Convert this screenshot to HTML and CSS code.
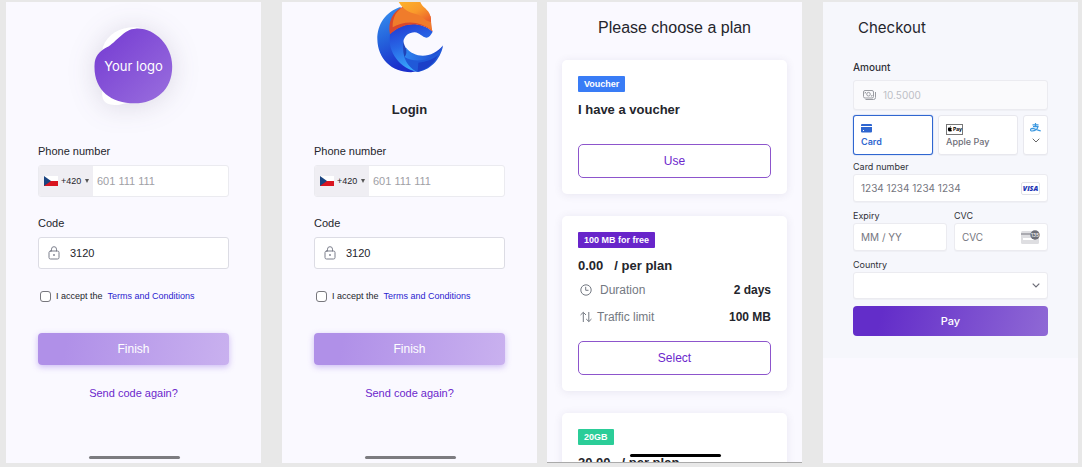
FILE: index.html
```
<!DOCTYPE html>
<html lang="en">
<head>
    <meta charset="UTF-8">
    <meta name="viewport" content="width=device-width, initial-scale=1.0">
    <title>Login and checkout screens</title>
    <link rel="stylesheet" href="styles.css">
</head>
<body>
    <svg width="0" height="0" class="defs" aria-hidden="true">
        <symbol id="flag-cz" viewBox="0 0 14 10">
            <path fill="#fff" d="M0 0h14v5H0z"/>
            <path fill="#d9141f" d="M0 5h14v5H0z"/>
            <path fill="#1a4480" d="M0 0l7 5-7 5z"/>
        </symbol>
        <symbol id="lock" viewBox="0 0 12 14">
            <g fill="none" stroke="#7b7e8b" stroke-linecap="round">
                <rect x="1" y="5" width="10" height="8" rx="1.5"/>
                <path d="M3.5 5V3.2a2.5 2.5 0 0 1 5 0V5"/>
            </g>
            <circle cx="6" cy="9" r=".9" fill="#7b7e8b"/>
        </symbol>
    </svg>
    <main>
        <section class="screen login">
            <div class="brand">
                <div class="blob-logo">
                    <svg viewBox="284 76 236 240" width="79" height="80" aria-hidden="true">
                        <defs>
                            <linearGradient id="blob" x1="0" y1="0" x2="1" y2="1">
                                <stop offset=".2" stop-color="#7b44d4"/>
                                <stop offset="1" stop-color="#9a6fde"/>
                            </linearGradient>
                        </defs>
                        <path fill="#fff" d="M310 140C325 95 370 76 415 80C470 90 500 200 480 260C450 290 390 308 360 312C325 316 308 305 308 280Z"/>
                        <path fill="url(#blob)" d="M285 195C286 165 300 152 322 140C350 125 375 84 408 84C465 80 518 135 518 195C520 265 470 308 405 308C335 308 283 270 285 195Z"/>
                    </svg>
                    <span>Your logo</span>
                </div>
            </div>
            <form>
                <label for="phone1">Phone number</label>
                <div class="field phone">
                    <div class="prefix">
                        <svg width="14" height="10" aria-hidden="true"><use href="#flag-cz"/></svg>
                        <select aria-label="Country code"><option>+420</option></select>
                        <svg width="4" height="4" viewBox="0 0 4 4" aria-hidden="true"><path d="M0 0h4L2 4z" fill="#555"/></svg>
                    </div>
                    <input type="tel" id="phone1" placeholder="601 111 111">
                </div>
                <label for="code1">Code</label>
                <div class="field code">
                    <svg width="12" height="14" aria-hidden="true"><use href="#lock"/></svg>
                    <input type="text" id="code1" value="3120">
                </div>
                <div class="terms">
                    <input type="checkbox" id="terms1">
                    <label for="terms1">I accept the</label>
                    <a href="#">Terms and Conditions</a>
                </div>
                <button type="button" class="finish">Finish</button>
                <a href="#" class="resend">Send code again?</a>
            </form>
            <div class="home-bar"></div>
        </section>

        <section class="screen login">
            <div class="brand">
                <svg class="flame-logo" viewBox="36 6 198 213" width="66" height="71" aria-hidden="true">
                    <defs>
                        <linearGradient id="c-left" x1="0" y1="0" x2=".3" y2="1">
                            <stop offset="0" stop-color="#3a96f2"/>
                            <stop offset=".5" stop-color="#2565dd"/>
                            <stop offset="1" stop-color="#1b2fcb"/>
                        </linearGradient>
                        <linearGradient id="c-mid" x1="0" y1="0" x2=".3" y2="1">
                            <stop offset="0" stop-color="#2236cf"/>
                            <stop offset=".5" stop-color="#2866e6"/>
                            <stop offset="1" stop-color="#38a8fb"/>
                        </linearGradient>
                        <linearGradient id="c-tail" x1="0" y1="0" x2="1" y2="0">
                            <stop offset="0" stop-color="#2e86f0"/>
                            <stop offset="1" stop-color="#1d42cc"/>
                        </linearGradient>
                        <linearGradient id="c-top" x1="0" y1="0" x2="1" y2="1">
                            <stop offset="0" stop-color="#fdb32c"/>
                            <stop offset=".5" stop-color="#f99a2b"/>
                            <stop offset="1" stop-color="#e9572b"/>
                        </linearGradient>
                    </defs>
                    <path fill="url(#c-left)" d="M108 20C62 34 36 74 37 118C38 176 80 217 138 217L156 214L90 120L78 80Z"/>
                    <path fill="url(#c-mid)" d="M75 103C105 66 165 60 203 95C198 105 192 112 184 113C172 112 164 98 149 97C132 97 117 108 115 126C114 165 128 198 156 215C108 207 66 158 75 103Z"/>
                    <path fill="#1f44b8" d="M115 122C118 142 128 155 145 164L134 180L118 171C114 155 113 138 115 122Z"/>
                    <path fill="url(#c-tail)" d="M122 142C150 178 204 175 234 136C225 165 195 188 150 186C136 184 127 178 118 171C125 165 126 155 122 142Z"/>
                    <path fill="#2059d8" d="M118 171C150 190 205 185 234 137C226 180 194 211 156 216C136 205 124 190 118 171Z"/>
                    <path fill="#1c40c8" d="M160 188C184 186 204 178 219 166C206 192 184 210 158 215Z"/>
                    <path fill="#d9482d" d="M75 103C68 68 81 34 114 20L196 48C200 66 197 80 203 95C168 65 115 65 75 103Z"/>
                    <path fill="#f07c2b" d="M83 82C82 52 96 29 116 22L194 44C200 63 197 78 202 92C165 62 120 60 83 82Z"/>
                    <path fill="url(#c-top)" d="M101 6H166C171 22 191 27 196 48C198 57 198 62 198 66C176 62 174 47 152 42C131 36 116 30 101 6Z"/>
                </svg>
                <h1>Login</h1>
            </div>
            <form>
                <label for="phone2">Phone number</label>
                <div class="field phone">
                    <div class="prefix">
                        <svg width="14" height="10" aria-hidden="true"><use href="#flag-cz"/></svg>
                        <select aria-label="Country code"><option>+420</option></select>
                        <svg width="4" height="4" viewBox="0 0 4 4" aria-hidden="true"><path d="M0 0h4L2 4z" fill="#555"/></svg>
                    </div>
                    <input type="tel" id="phone2" placeholder="601 111 111">
                </div>
                <label for="code2">Code</label>
                <div class="field code">
                    <svg width="12" height="14" aria-hidden="true"><use href="#lock"/></svg>
                    <input type="text" id="code2" value="3120">
                </div>
                <div class="terms">
                    <input type="checkbox" id="terms2">
                    <label for="terms2">I accept the</label>
                    <a href="#">Terms and Conditions</a>
                </div>
                <button type="button" class="finish">Finish</button>
                <a href="#" class="resend">Send code again?</a>
            </form>
            <div class="home-bar"></div>
        </section>

        <section class="screen plans">
            <h1>Please choose a plan</h1>
            <article class="plan">
                <span class="badge blue">Voucher</span>
                <h2>I have a voucher</h2>
                <button type="button" class="use">Use</button>
            </article>
            <article class="plan">
                <span class="badge purple">100 MB for free</span>
                <h2><span>0.00</span><span>/ per plan</span></h2>
                <dl>
                    <div class="duration">
                        <dt>
                            <svg width="12" height="12" viewBox="0 0 12 12" aria-hidden="true"><g fill="none" stroke="#747982"><circle cx="6" cy="6" r="5.2"/><path d="M5.7 2.8v3.5h2.8"/></g></svg>
                            Duration
                        </dt>
                        <dd>2 days</dd>
                    </div>
                    <div class="traffic">
                        <dt>
                            <svg width="12" height="12" viewBox="0 0 12 12" aria-hidden="true"><path d="M3.3 11V1.5M.5 4l2.8-2.7L6 4M8.8 1v9.5M6.2 8l2.6 2.6L11.5 8" fill="none" stroke="#747982"/></svg>
                            Traffic limit
                        </dt>
                        <dd>100 MB</dd>
                    </div>
                </dl>
                <button type="button">Select</button>
            </article>
            <article class="plan">
                <span class="badge green">20GB</span>
                <h2><span>20.00</span><span>/ per plan</span></h2>
            </article>
            <div class="home-bar"></div>
        </section>

        <section class="screen checkout">
            <h1>Checkout</h1>
            <form>
                <label for="amount" class="amount-label">Amount</label>
                <div class="field amount">
                    <svg width="13" height="10" viewBox="0 0 13 10" aria-hidden="true"><g fill="none" stroke="#9a9ca2"><rect x=".5" y=".5" width="10" height="7.5" rx="1.5"/><circle cx="5.5" cy="4.2" r="1.8"/><path d="M2 3.5v-1h1M9 5v1H8M2.5 9.5h8a2 2 0 0 0 2-2V2"/></g></svg>
                    <input type="text" id="amount" value="10.5000" disabled>
                </div>
                <div class="methods">
                    <button type="button" class="active">
                        <svg width="11" height="9" viewBox="0 0 11 9" aria-hidden="true"><path fill="#2f66d0" d="M1 0h9q1 0 1 1v1H0V1q0-1 1-1zM0 3h11v4.500q0 1-1 1H1q-1 0-1-1zM2 6v1h1V6z" fill-rule="evenodd"/></svg>
                        Card
                    </button>
                    <button type="button">
                        <svg width="17" height="11" viewBox="0 0 17 11" aria-hidden="true"><rect x=".5" y=".5" width="16" height="10" fill="#fff" stroke="#777"/><path d="M4.800 3.500c-.7-.3-1 .1-1.300.1S2 3.200 1.900 5s1 2.700 1.500 2.500.7-.2 1.200 0S5.800 7 5.900 6.400c-1-.4-.8-1.500-.1-1.900-.2-.5-.6-.8-1-1zM4 3c0-.7.4-1.100 1-1.200C5.100 2.500 4.700 3 4 3z"/><text x="7" y="7" font-size="5" font-weight="700">Pay</text></svg>
                        Apple Pay
                    </button>
                    <button type="button" class="more" aria-label="More payment methods">
                        <svg width="11" height="9" viewBox="0 0 11 9" aria-hidden="true"><path d="M2.500 1.800h6M5.500 0v3.500M3 3.700h5C7.300 6.500 4.500 8 2 8 0 8 0 5.500 2.200 5.400c2.300 0 5 1.800 8.500 2.400" fill="none" stroke="#3b98e0" stroke-width="1.200"/></svg>
                        <svg width="8" height="5" viewBox="0 0 8 5" aria-hidden="true"><path d="M.7.700L4 4 7.300.7" fill="none" stroke="#666"/></svg>
                    </button>
                </div>
                <label for="card">Card number</label>
                <div class="field">
                    <input type="text" id="card" placeholder="1234 1234 1234 1234">
                    <svg width="19" height="13" viewBox="0 0 19 13" aria-hidden="true"><rect x=".5" y=".5" width="18" height="12" rx="1.500" fill="#fff" stroke="#e1e1e6"/><text x="9.500" y="9" font-family="Open Sans" font-size="7" font-weight="800" font-style="italic" text-anchor="middle" fill="#2034b4">VISA</text></svg>
                </div>
                <div class="pair">
                    <div>
                        <label for="expiry">Expiry</label>
                        <div class="field">
                            <input type="text" id="expiry" placeholder="MM / YY">
                        </div>
                    </div>
                    <div>
                        <label for="cvc">CVC</label>
                        <div class="field">
                            <input type="text" id="cvc" placeholder="CVC">
                            <svg width="19" height="14" viewBox="0 0 19 14" aria-hidden="true"><rect y="1" width="18" height="13" rx="1.500" fill="#dedee1"/><path fill="#aaaab0" d="M0 3h18v2H0z"/><path fill="#fff" d="M2 8h11v2H2z"/><circle cx="14" cy="5" r="4.700" fill="#6d6e77"/><text x="14" y="7" font-size="5" text-anchor="middle" fill="#fff">135</text></svg>
                        </div>
                    </div>
                </div>
                <label for="country">Country</label>
                <div class="field country">
                    <select id="country"><option></option></select>
                    <svg width="8" height="5" viewBox="0 0 8 5" aria-hidden="true"><path d="M.7.700L4 4 7.300.7" fill="none" stroke="#6d6e78" stroke-width="1.200"/></svg>
                </div>
                <button type="button" class="pay">Pay</button>
            </form>
        </section>
    </main>
</body>
</html>
```
FILE: styles.css
```
* {
    margin: 0;
    padding: 0;
    box-sizing: border-box;
}
body {
    font-family: 'Liberation Sans', Arial, sans-serif;
    font-size: 11px;
    line-height: 20px;
    color: #24252c;
    background-color: #e8e8e8;
}
.defs {
    position: absolute;
}
main {
    display: grid;
    grid-template-columns: 1fr 21px 1fr 10px 1fr 21px 1fr;
    height: 100vh;
    padding: 2px 4px 4px 6px;
}
.screen {
    position: relative;
    min-width: 0;
    min-height: 0;
    overflow: hidden;
    background-color: #faf9ff;
}
.screen:nth-child(2) {
    grid-column: 3;
}
.screen:nth-child(3) {
    grid-column: 5;
}
.screen:nth-child(4) {
    grid-column: 7;
}
input, select, button {
    font: inherit;
    color: inherit;
    border: none;
    background: none;
    min-width: 0;
    outline: none;
}
select {
    appearance: none;
}
label {
    display: block;
}
a {
    text-decoration: none;
}
svg {
    flex: none;
}
.field {
    display: flex;
    align-items: center;
    background-color: #fff;
    border: 1px solid #ebebf0;
    border-radius: 3px;
    overflow: hidden;
}
.field input {
    flex: 1;
    width: 100%;
}
.home-bar {
    position: absolute;
    bottom: 4px;
    left: 50%;
    width: 91px;
    height: 3px;
    margin-left: -45px;
    border-radius: 2px;
    background-color: #7c7c80;
}

/* login */
.login {
    padding: 0 32px;
}
.brand {
    display: flex;
    flex-direction: column;
    align-items: center;
    height: 139px;
}
.blob-logo {
    position: relative;
    display: flex;
    align-items: center;
    justify-content: center;
    width: 79px;
    height: 80px;
    margin-top: 24px;
}
.blob-logo svg {
    position: absolute;
    top: 0;
    left: 0;
    filter: drop-shadow(0 2px 14px rgba(60, 50, 90, 0.16));
}
.blob-logo span {
    position: relative;
    font-family: Inter, sans-serif;
    font-size: 13px;
    color: #fff;
}
.brand h1 {
    margin-top: 27px;
    font-size: 13px;
}
.login form {
    display: flex;
    flex-direction: column;
}
.login .field {
    height: 32px;
    margin: 4px 0 16px;
}
.prefix {
    display: flex;
    align-items: center;
    gap: 3px;
    height: 100%;
    padding: 0 4px 0 5px;
    font-size: 9px;
    background-color: #efeef3;
}
.phone input {
    padding-left: 4px;
}
.phone input::placeholder {
    color: #a0a0a5;
}
.login .code {
    gap: 10px;
    padding: 0 9px;
    border-color: #dcdce4;
    margin-bottom: 17px;
}
.terms {
    display: flex;
    align-items: center;
    gap: 5px;
    font-size: 9px;
}
.terms input {
    appearance: none;
    width: 11px;
    height: 11px;
    margin-left: 2px;
    border: 1px solid #77777d;
    border-radius: 3px;
    background-color: #fff;
}
.terms a {
    color: #2a23cf;
}
.finish {
    height: 32px;
    margin: 27px 0 18px;
    border-radius: 4px;
    font-size: 12px;
    color: #fff;
    background: linear-gradient(100deg, #b090e8 15%, #c9b1ef);
    box-shadow: 0 2px 6px rgba(150, 110, 230, 0.45);
}
.resend {
    align-self: center;
    color: #6c27cc;
}

/* plans */
.plans {
    display: flex;
    flex-direction: column;
    gap: 22px;
    padding: 16px 15px 0;
    border-bottom: 1px solid #aaa;
}
.plans h1 {
    font-size: 16px;
    font-weight: 400;
    line-height: 20px;
    text-align: center;
}
.plan {
    display: flex;
    flex-direction: column;
    flex: none;
    padding: 16px;
    border-radius: 5px;
    background-color: #fff;
    box-shadow: 0 1px 8px rgba(70, 60, 110, 0.1);
}
.badge {
    align-self: flex-start;
    padding: 0 6px;
    border-radius: 1px;
    font-size: 9px;
    font-weight: 700;
    line-height: 16px;
    color: #fff;
}
.blue {
    background-color: #397cf6;
}
.purple {
    background-color: #6825ca;
}
.green {
    background-color: #2bcd98;
}
.plan h2 {
    display: flex;
    gap: 11px;
    margin-top: 8px;
    font-size: 13px;
}
.plan dl {
    display: grid;
    gap: 7px;
    margin: 4px 0 14px;
    font-size: 12px;
}
.plan dl div {
    display: flex;
    justify-content: space-between;
}
.plan dt {
    display: flex;
    align-items: center;
    gap: 8px;
    padding-left: 2px;
    color: #747982;
}
.plan .traffic dt {
    gap: 5px;
}
.plan dd {
    font-weight: 700;
}
.plan button {
    height: 34px;
    border: 1px solid #8d55cc;
    border-radius: 5px;
    font-size: 12px;
    color: #6c27cc;
}
.plan .use {
    margin-top: 24px;
}
.plans .home-bar {
    bottom: 5px;
    background-color: #000;
}

/* checkout */
.checkout {
    padding: 16px 30px 0;
    font-family: Inter, sans-serif;
    font-size: 10px;
    background: linear-gradient(#f6f7fc 356px, #faf9ff 356px);
}
.checkout h1 {
    padding-left: 5px;
    font-size: 15px;
    font-weight: 400;
    line-height: 20px;
}
.checkout form {
    display: flex;
    flex-direction: column;
}
.checkout label {
    font-size: 9px;
    line-height: 14px;
    color: #303138;
}
.checkout .amount-label {
    margin: 20px 0 4px;
    font-size: 10px;
    font-weight: 500;
    line-height: 18px;
}
.checkout .field {
    height: 28px;
    padding: 0 7px;
    margin-bottom: 7px;
    box-shadow: 0 1px 1px rgba(0, 0, 0, 0.03);
}
.checkout input::placeholder {
    color: #757680;
}
.checkout .amount {
    gap: 7px;
    height: 30px;
    padding: 0 9px;
    margin-bottom: 5px;
    background-color: #fafafc;
}
.amount input {
    color: #bdbfc6;
}
.methods {
    display: grid;
    grid-template-columns: 1fr 1fr 25px;
    gap: 5px;
    margin-bottom: 5px;
}
.methods button {
    display: flex;
    flex-direction: column;
    align-items: flex-start;
    justify-content: space-between;
    height: 40px;
    padding: 8px 7px 6px;
    border: 1px solid #e8e8ee;
    border-radius: 3px;
    background-color: #fff;
    box-shadow: 0 1px 1px rgba(0, 0, 0, 0.03);
    font-size: 9px;
    font-weight: 500;
    line-height: 12px;
    color: #6d6e78;
}
.methods .active {
    border: 1px solid #2f66d0;
    box-shadow: 0 0 1px #2f66d0;
    font-weight: 600;
    color: #2f66d0;
}
.methods .more {
    align-items: center;
    padding: 7px 0 11px;
}
.pair {
    display: grid;
    grid-template-columns: 1fr 1fr;
    gap: 7px;
}
.checkout .country {
    height: 27px;
}
.country select {
    flex: 1;
}
.pay {
    height: 30px;
    border-radius: 4px;
    font-size: 11px;
    font-weight: 500;
    color: #fff;
    background: linear-gradient(105deg, #632dc9 15%, #8f69d5);
}
```
